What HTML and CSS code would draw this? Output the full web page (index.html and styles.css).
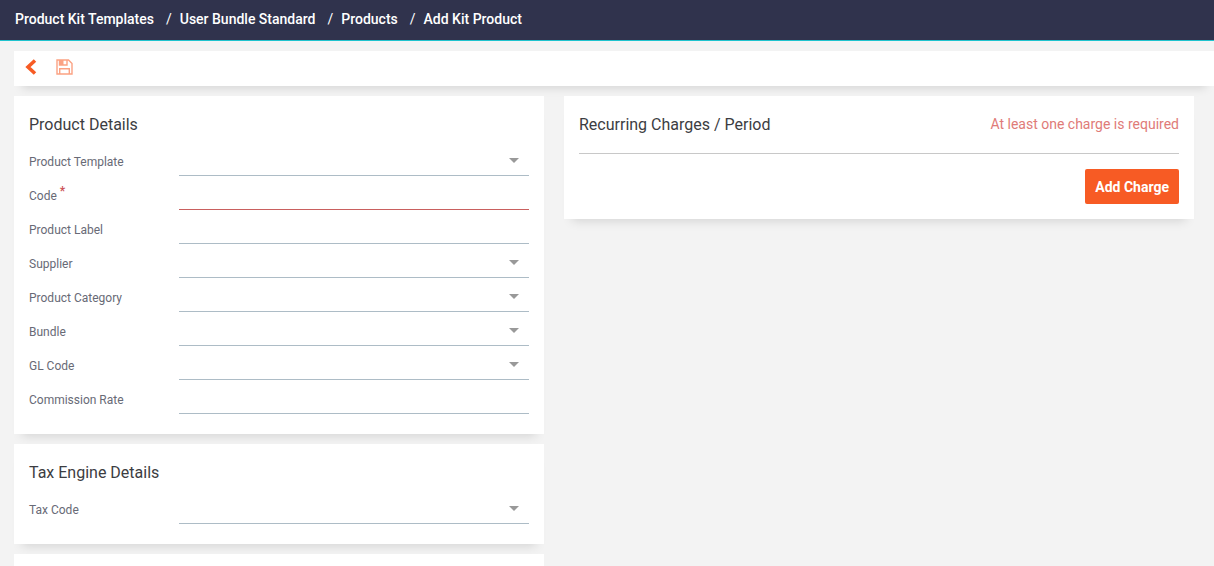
FILE: index.html
```
<!DOCTYPE html>
<html lang="en">
<head>
    <meta charset="UTF-8">
    <meta name="viewport" content="width=device-width, initial-scale=1.0">
    <title>Add Kit Product</title>
    <link rel="stylesheet" href="styles.css">
</head>
<body>
    <header class="topbar">
        <nav class="breadcrumb" aria-label="Breadcrumb">
            <a href="#">Product Kit Templates</a>
            <a href="#">User Bundle Standard</a>
            <a href="#">Products</a>
            <a href="#">Add Kit Product</a>
        </nav>
    </header>

    <div class="toolbar">
        <button type="button" class="icon-button" aria-label="Back">
            <svg width="12" height="16" viewBox="0 0 12 16">
                <path d="M10 1.5 L3 8 L10 14.5" fill="none" stroke="#f75b24" stroke-width="3.6"/>
            </svg>
        </button>
        <button type="button" class="icon-button" aria-label="Save">
            <svg width="17" height="16" viewBox="0 0 17 16" fill="none" stroke="#fba283" stroke-width="1.4">
                <path d="M1 1 H12.5 L16 4.5 V15 H1 Z"/>
                <path d="M3.5 1 V6 H11 V1"/>
                <path d="M3.7 15 V9.7 H13.3 V15"/>
                <path d="M4 1 H7.5 V6 H4 Z" fill="#fba283" stroke="none"/>
            </svg>
        </button>
    </div>

    <main class="content">
        <div class="column">
            <section class="card">
                <h2>Product Details</h2>
                <div class="field">
                    <label for="template">Product Template</label>
                    <div class="select"><select id="template"><option></option></select></div>
                </div>
                <div class="field">
                    <label for="code">Code <sup class="star">*</sup></label>
                    <input type="text" id="code" class="invalid" required>
                </div>
                <div class="field">
                    <label for="productLabel">Product Label</label>
                    <input type="text" id="productLabel">
                </div>
                <div class="field">
                    <label for="supplier">Supplier</label>
                    <div class="select"><select id="supplier"><option></option></select></div>
                </div>
                <div class="field">
                    <label for="category">Product Category</label>
                    <div class="select"><select id="category"><option></option></select></div>
                </div>
                <div class="field">
                    <label for="bundle">Bundle</label>
                    <div class="select"><select id="bundle"><option></option></select></div>
                </div>
                <div class="field">
                    <label for="glCode">GL Code</label>
                    <div class="select"><select id="glCode"><option></option></select></div>
                </div>
                <div class="field">
                    <label for="commission">Commission Rate</label>
                    <input type="text" id="commission">
                </div>
            </section>

            <section class="card">
                <h2>Tax Engine Details</h2>
                <div class="field">
                    <label for="taxCode">Tax Code</label>
                    <div class="select"><select id="taxCode"><option></option></select></div>
                </div>
            </section>

            <section class="card"></section>
        </div>

        <div class="column">
            <section class="card charges">
                <div class="card-header">
                    <h2>Recurring Charges / Period</h2>
                    <span class="error">At least one charge is required</span>
                </div>
                <div class="actions">
                    <button type="button" class="add-button">Add Charge</button>
                </div>
            </section>
        </div>
    </main>
</body>
</html>
```
FILE: styles.css
```
* {
    box-sizing: border-box;
}
body {
    margin: 0;
    font-family: Roboto, "Liberation Sans", sans-serif;
    background-color: #f3f3f3;
    color: #3c3d42;
    overflow-x: hidden;
}
.topbar {
    height: 41px;
    padding: 0 15px;
    background-color: #30334d;
    border-bottom: 1px solid #1fc3ce;
}
.breadcrumb {
    display: flex;
    line-height: 38px;
    font-size: 14px;
    font-weight: 500;
}
.breadcrumb a {
    color: white;
    text-decoration: none;
}
.breadcrumb a + a:before {
    content: "/";
    margin: 0 8px 0 12px;
    font-weight: 400;
}
.toolbar {
    display: flex;
    align-items: center;
    gap: 19px;
    height: 35px;
    margin: 10px 0 10px 14px;
    padding: 0 0 3px 11px;
    background: white;
    box-shadow: 0 10px 10px -8px rgba(0, 0, 0, 0.13);
}
.icon-button {
    display: flex;
    padding: 0;
    border: none;
    background: none;
    cursor: pointer;
}
.content {
    display: grid;
    grid-template-columns: 53fr 63fr;
    gap: 20px;
    margin: 0 20px 0 14px;
}
.card {
    margin-bottom: 10px;
    padding: 15px 15px 20px;
    background: white;
    box-shadow: 0 10px 10px -8px rgba(0, 0, 0, 0.13);
}
h2 {
    margin: 0;
    font-size: 16px;
    font-weight: 400;
    line-height: 28px;
}
.card > h2 {
    margin-bottom: 3px;
}
.field {
    display: grid;
    grid-template-columns: 150px 1fr;
    height: 34px;
}
.field label {
    font-size: 12px;
    line-height: 40px;
    color: #686a76;
}
.star {
    font-size: 12px;
    font-weight: 700;
    line-height: 0;
    color: #cc5358;
}
.field input,
.field select {
    width: 100%;
    height: 34px;
    padding: 0 30px 0 5px;
    border: none;
    border-bottom: 1px solid #adbcc6;
    border-radius: 0;
    outline: none;
    background: none;
    appearance: none;
    font: inherit;
    font-size: 12px;
}
.field input.invalid {
    border-bottom-color: #c9605f;
}
.select {
    position: relative;
}
.select:after {
    content: "";
    position: absolute;
    right: 10px;
    top: 16px;
    border: 5px solid transparent;
    border-top-color: #999;
    border-bottom: none;
    pointer-events: none;
}
.charges {
    padding-bottom: 15px;
}
.card-header {
    display: flex;
    justify-content: space-between;
    padding-bottom: 14px;
    border-bottom: 1px solid #c8c8c8;
}
.error {
    font-size: 14px;
    line-height: 26px;
    color: #e07b78;
}
.actions {
    display: flex;
    justify-content: flex-end;
    margin-top: 15px;
}
.add-button {
    height: 35px;
    padding: 0 10px;
    border: none;
    border-radius: 2px;
    background-color: #f75b24;
    color: white;
    font-family: inherit;
    font-size: 14px;
    font-weight: 700;
    cursor: pointer;
}
```
